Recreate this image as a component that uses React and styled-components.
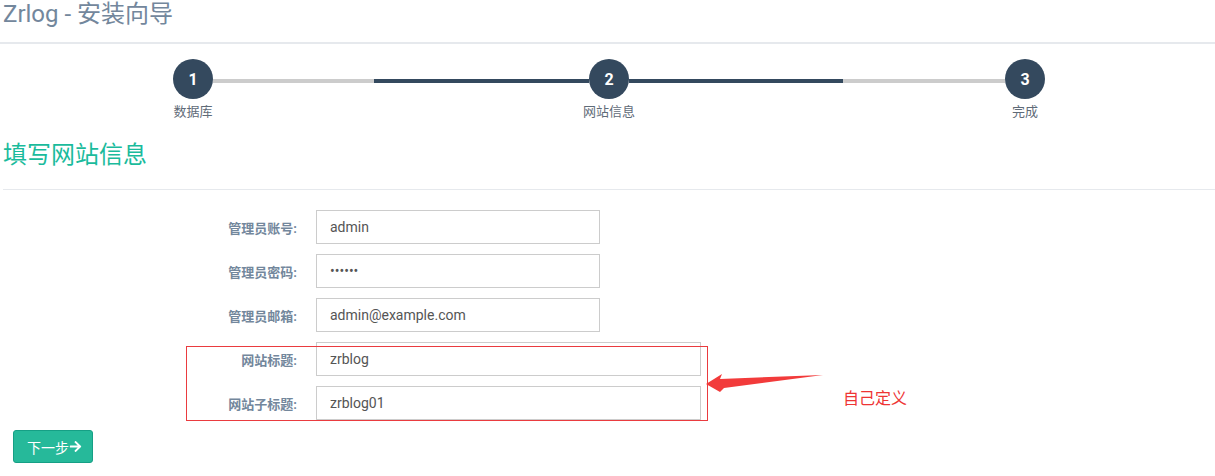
import React from 'react'
import styled, { createGlobalStyle } from 'styled-components'
import { FaArrowRight } from 'react-icons/fa'

const GlobalStyle = createGlobalStyle`
  body {
    margin: 0;
    background: #fff;
    font-family: Roboto, "Noto Sans CJK SC", sans-serif;
  }
`

const Page = styled.div`
  position: relative;
  width: 1215px;
  min-height: 476px;
`

const Header = styled.header`
  height: 42px;
  border-bottom: 2px solid #e6e9ed;
`

const Title = styled.h2`
  margin: 0;
  padding-left: 3px;
  font-size: 24px;
  line-height: 28px;
  font-weight: 400;
  color: #73879c;
`

const Steps = styled.div`
  display: flex;
  align-items: flex-start;
  padding: 15px 170px 0 173px;
`

const Step = styled.div`
  width: 40px;
  display: flex;
  flex-direction: column;
  align-items: center;
`

const Circle = styled.div`
  width: 40px;
  height: 40px;
  border-radius: 50%;
  background: #34495e;
  color: #fff;
  font-size: 16px;
  font-weight: 700;
  display: flex;
  align-items: center;
  justify-content: center;
`

const StepLabel = styled.div`
  margin-top: 4px;
  white-space: nowrap;
  font-size: 13px;
  line-height: 18px;
  color: #5f6b78;
`

const Connector = styled.div`
  flex: 1;
  display: flex;
  height: 4px;
  margin-top: 20px;
`

const Bar = styled.div`
  flex: ${p => p.$grow};
  background: ${p => (p.$done ? '#34495e' : '#cccccc')};
`

const SectionTitle = styled.h3`
  margin: 19px 0 0 3px;
  padding-bottom: 19px;
  border-bottom: 1px solid #e6e9ed;
  font-size: 24px;
  line-height: 30px;
  font-weight: 400;
  color: #1abb9c;
`

const Form = styled.form`
  display: flex;
  flex-direction: column;
  gap: 10px;
  margin-top: 20px;
`

const Row = styled.div`
  display: grid;
  grid-template-columns: 297px auto;
  column-gap: 19px;
  align-items: center;
`

const Label = styled.label`
  text-align: right;
  font-size: 13px;
  font-weight: 700;
  color: #73879c;
`

const Input = styled.input`
  box-sizing: border-box;
  width: ${p => p.$width}px;
  height: 34px;
  padding: 0 13px;
  border: 1px solid #ccc;
  border-radius: 0;
  font-family: Roboto, "Noto Sans CJK SC", sans-serif;
  font-size: 14px;
  color: #555;
  outline: none;
`

const NextButton = styled.button`
  display: flex;
  align-items: center;
  width: 80px;
  height: 33px;
  margin: 10px 0 0 13px;
  padding: 0 0 0 13px;
  background: #26b99a;
  border: 1px solid #169f85;
  border-radius: 3px;
  color: #fff;
  font-family: "Noto Sans CJK SC", sans-serif;
  font-size: 14px;
  cursor: pointer;

  svg {
    font-size: 13px;
  }
`

const NoteBox = styled.div`
  position: absolute;
  left: 186px;
  top: 346px;
  width: 522px;
  height: 75px;
  box-sizing: border-box;
  border: 1px solid #ea3b3f;
  pointer-events: none;
`

const NoteArrow = styled.svg`
  position: absolute;
  left: 700px;
  top: 370px;
`

const NoteText = styled.div`
  position: absolute;
  left: 843px;
  top: 386px;
  font-family: "Noto Sans CJK SC", sans-serif;
  font-size: 16px;
  line-height: 22px;
  color: #ee3434;
`

const fields = [
  { label: '管理员账号:', value: 'admin', width: 284 },
  { label: '管理员密码:', value: '123456', width: 284, type: 'password' },
  { label: '管理员邮箱:', value: 'admin@example.com', width: 284 },
  { label: '网站标题:', value: 'zrblog', width: 385 },
  { label: '网站子标题:', value: 'zrblog01', width: 385 },
]

export default function App() {
  return (
    <Page>
      <GlobalStyle />
      <Header>
        <Title>Zrlog - 安装向导</Title>
      </Header>

      <Steps>
        <Step>
          <Circle>1</Circle>
          <StepLabel>数据库</StepLabel>
        </Step>
        <Connector>
          <Bar $grow={161} />
          <Bar $grow={215} $done />
        </Connector>
        <Step>
          <Circle>2</Circle>
          <StepLabel>网站信息</StepLabel>
        </Step>
        <Connector>
          <Bar $grow={214} $done />
          <Bar $grow={162} />
        </Connector>
        <Step>
          <Circle>3</Circle>
          <StepLabel>完成</StepLabel>
        </Step>
      </Steps>

      <SectionTitle>填写网站信息</SectionTitle>

      <Form onSubmit={e => e.preventDefault()}>
        {fields.map((f, i) => (
          <Row key={i}>
            <Label>{f.label}</Label>
            <Input type={f.type || 'text'} defaultValue={f.value} $width={f.width} />
          </Row>
        ))}
      </Form>

      <NextButton type="button">
        下一步<FaArrowRight />
      </NextButton>

      <NoteBox />
      <NoteArrow width="130" height="26" viewBox="0 0 130 26">
        <polygon points="6,14 22,4 20,9 123,5 24,18 20,22" fill="#f23b3b" />
      </NoteArrow>
      <NoteText>自己定义</NoteText>
    </Page>
  )
}
